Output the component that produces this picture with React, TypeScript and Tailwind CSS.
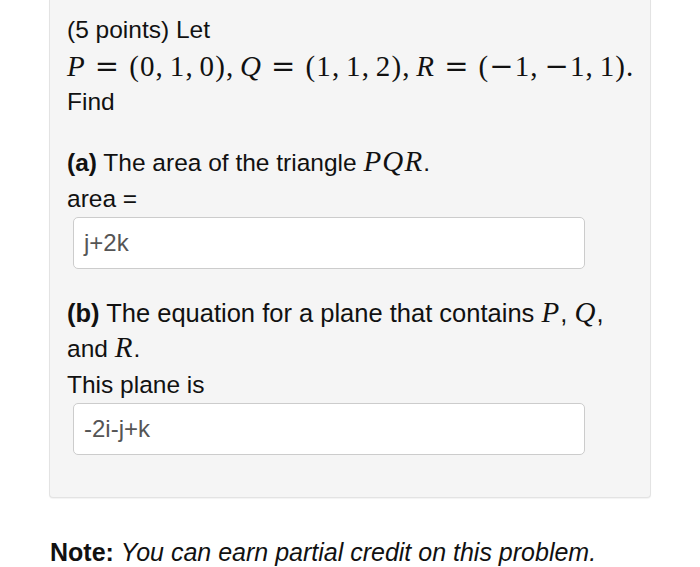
const sans = "font-['Liberation_Sans',Arial,sans-serif]";
const math = "font-['Liberation_Serif','DejaVu_Serif',serif]";
const wide = "font-['DejaVu_Serif',serif]";

function M({ children }: { children: React.ReactNode }) {
  return <span className={`${math} italic text-[29px] leading-none tracking-[0.04em]`}>{children}</span>;
}

function Eq() {
  return <span className={`${wide} mx-[9px]`}>=</span>;
}

function C() {
  return <span className="mr-[0.2em]">,</span>;
}

function Num({ v }: { v: string }) {
  if (v.startsWith("−")) {
    return (
      <span>
        <span className={wide}>−</span>
        {v.slice(1)}
      </span>
    );
  }
  return <span>{v}</span>;
}

function Tuple({ a, b, c }: { a: string; b: string; c: string }) {
  return (
    <span>
      (<Num v={a} />
      <C />
      <Num v={b} />
      <C />
      <Num v={c} />)
    </span>
  );
}

function Answer({ value }: { value: string }) {
  return (
    <div className="ml-[6px] w-[512px] h-[52px] rounded-[5px] border border-[#cccccc] bg-white flex items-center px-[10px] text-[24px] text-[#555555]">
      {value}
    </div>
  );
}

export default function App() {
  return (
    <div className={`${sans} w-[700px] h-[567px] bg-white text-[#111111] overflow-hidden`}>
      <div className="ml-[49px] w-[602px] h-[498px] bg-[#f5f5f5] border border-t-0 border-[#e3e3e3] rounded-b-[4px] shadow-[0_1px_1px_rgba(0,0,0,0.05)] pl-[17px] pr-[4px] pt-[12px] text-[24.5px] leading-[36px]">
        <div>(5 points) Let</div>
        <div className={`${math} text-[29px] h-[36px] leading-[36px] whitespace-nowrap tracking-[1.1px]`}>
          <i>P</i>
          <Eq />
          <Tuple a="0" b="1" c="0" />
          <C />
          <i>Q</i>
          <Eq />
          <Tuple a="1" b="1" c="2" />
          <C />
          <i>R</i>
          <Eq />
          <Tuple a="−1" b="−1" c="1" />.
        </div>
        <div>Find</div>

        <div className="mt-[25px] h-[36px]">
          <b>(a)</b> The area of the triangle <M>PQR</M>.
        </div>
        <div>area =</div>
        <Answer value="j+2k" />

        <div className="mt-[26px]">
          <div className="h-[36px] whitespace-nowrap text-[25.5px]">
            <b>(b)</b> The equation for a plane that contains <M>P</M>, <M>Q</M>,
          </div>
          <div className="h-[36px]">
            and <M>R</M>.
          </div>
        </div>
        <div>This plane is</div>
        <Answer value="-2i-j+k" />
      </div>

      <div className="ml-[50px] mt-[36px] text-[25px] leading-[36px]">
        <b>Note:</b> <i>You can earn partial credit on this problem.</i>
      </div>
    </div>
  );
}
